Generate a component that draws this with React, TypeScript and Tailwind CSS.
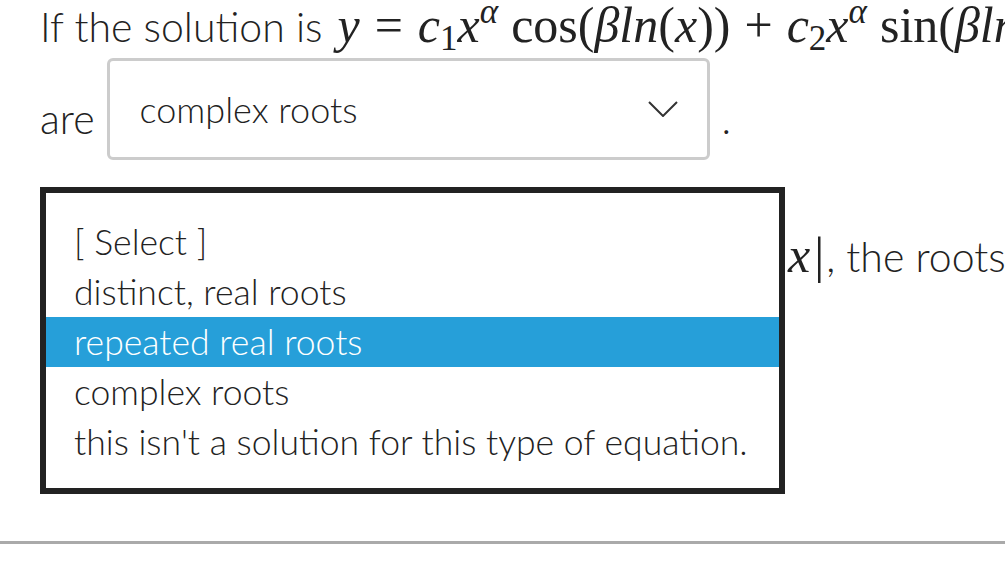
import React from "react";

const body = "font-['Lato','Noto_Sans',sans-serif]";
const math = "font-['Liberation_Serif','DejaVu_Serif',serif]";

function I({ children }: { children: React.ReactNode }) {
  return <span className="italic">{children}</span>;
}

function Sub({ children }: { children: React.ReactNode }) {
  return <span className="relative top-[0.22em] text-[0.7em]">{children}</span>;
}

function Sup({ children }: { children: React.ReactNode }) {
  return <span className="relative -top-[0.55em] text-[0.7em] italic">{children}</span>;
}

const options = [
  "[ Select ]",
  "distinct, real roots",
  "repeated real roots",
  "complex roots",
  "this isn't a solution for this type of equation.",
];

function Listbox() {
  return (
    <ul className="absolute left-[40px] top-[187px] w-[745px] border-[6px] border-[#222] bg-white pt-[24px] pb-[21px]">
      {options.map((o, i) => (
        <li
          key={o}
          className={
            "flex h-[50px] items-center whitespace-nowrap pl-[28px] text-[35.6px] font-light " +
            (i === 2 ? "bg-[#269fd9] text-white" : "text-[#222]")
          }
        >
          {o}
        </li>
      ))}
    </ul>
  );
}

export default function App() {
  return (
    <div className={`relative h-[583px] w-[1005px] overflow-hidden bg-white text-[#222] ${body}`}>
      <div className="h-[541px] pl-[40px]">
        <div className="flex h-[58px] items-baseline whitespace-nowrap leading-none">
          <span className="shrink-0 text-[41px] font-light">If the solution is</span>
          <span className={`ml-[15px] shrink-0 text-[50px] ${math}`}>
            <I>y</I>
            <span className="mx-[15px]">=</span>
            <I>c</I>
            <Sub>1</Sub>
            <I>x</I>
            <Sup>α</Sup>
            <span className="ml-[13px]">cos</span>(<I>β</I>
            <I>ln</I>(<I>x</I>))
            <span className="mx-[14px]">+</span>
            <I>c</I>
            <Sub>2</Sub>
            <I>x</I>
            <Sup>α</Sup>
            <span className="ml-[13px]">sin</span>(<I>β</I>
            <I>ln</I>(<I>x</I>))
          </span>
        </div>

        <div className="flex items-start whitespace-nowrap">
          <span className="mt-[40px] shrink-0 text-[41px] font-light leading-none">are</span>
          <div className="ml-[12px] flex h-[102px] w-[603px] shrink-0 items-center justify-between rounded-[6px] border-[3px] border-[#cccccc] pl-[30px] pr-[29px]">
            <span className="text-[36px] font-light">complex roots</span>
            <svg width="30" height="16" viewBox="0 0 30 16" fill="none" stroke="#333" strokeWidth="2">
              <path d="M1 1 L15 15 L29 1" />
            </svg>
          </div>
          <span className="ml-[12px] mt-[40px] shrink-0 text-[41px] font-light leading-none">.</span>
        </div>

        <div className="mt-[70px] flex items-baseline whitespace-nowrap leading-none">
          <span className="inline-block w-[748px] shrink-0 overflow-hidden text-[41px] font-light">
            If the solution is y = c₁|x|
          </span>
          <span className={`shrink-0 text-[50px] ${math}`}>
            <I>x</I>
            <span className="ml-[4px]">|</span>
          </span>
          <span className="ml-[2px] shrink-0 text-[41px] font-light">, the roots are</span>
        </div>
      </div>
      <div className="h-[3px] w-full bg-[#aaa]" />
      <Listbox />
    </div>
  );
}
